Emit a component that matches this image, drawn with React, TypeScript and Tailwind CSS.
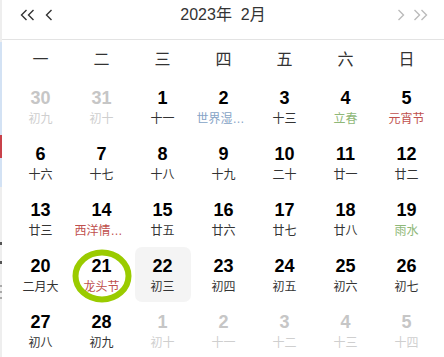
type Day = { d: number; l: string; muted?: boolean; tone?: 'blue' | 'green' | 'red' }

const weeks: Day[][] = [
  [
    { d: 30, l: '初九', muted: true },
    { d: 31, l: '初十', muted: true },
    { d: 1, l: '十一' },
    { d: 2, l: '世界湿地日', tone: 'blue' },
    { d: 3, l: '十三' },
    { d: 4, l: '立春', tone: 'green' },
    { d: 5, l: '元宵节', tone: 'red' },
  ],
  [
    { d: 6, l: '十六' },
    { d: 7, l: '十七' },
    { d: 8, l: '十八' },
    { d: 9, l: '十九' },
    { d: 10, l: '二十' },
    { d: 11, l: '廿一' },
    { d: 12, l: '廿二' },
  ],
  [
    { d: 13, l: '廿三' },
    { d: 14, l: '西洋情人节', tone: 'red' },
    { d: 15, l: '廿五' },
    { d: 16, l: '廿六' },
    { d: 17, l: '廿七' },
    { d: 18, l: '廿八' },
    { d: 19, l: '雨水', tone: 'green' },
  ],
  [
    { d: 20, l: '二月大' },
    { d: 21, l: '龙头节', tone: 'red' },
    { d: 22, l: '初三' },
    { d: 23, l: '初四' },
    { d: 24, l: '初五' },
    { d: 25, l: '初六' },
    { d: 26, l: '初七' },
  ],
  [
    { d: 27, l: '初八' },
    { d: 28, l: '初九' },
    { d: 1, l: '初十', muted: true },
    { d: 2, l: '十一', muted: true },
    { d: 3, l: '十二', muted: true },
    { d: 4, l: '十三', muted: true },
    { d: 5, l: '十四', muted: true },
  ],
]

const toneClass = {
  blue: 'text-[#86a3c6]',
  green: 'text-[#8fb878]',
  red: 'text-[#c0504d]',
}

function Chevron({ dir, color }: { dir: 'l' | 'r'; color: string }) {
  return (
    <svg width="8" height="12" viewBox="0 0 8 12" fill="none">
      <path
        d={dir === 'l' ? 'M6.5 1 L1.5 6 L6.5 11' : 'M1.5 1 L6.5 6 L1.5 11'}
        stroke={color}
        strokeWidth="1.4"
      />
    </svg>
  )
}

export default function App() {
  return (
    <div className="relative flex w-[444px] h-[357px] overflow-hidden bg-white font-['Liberation_Sans','Noto_Sans_CJK_SC',sans-serif]">
      {/* strip of the page behind */}
      <div className="flex w-[2px] flex-col bg-[#eeeeee]">
        <div className="h-[42px]" />
        <div className="h-[93px] bg-[#d3e2f4]" />
        <div className="h-[23px] bg-[#c8414a]" />
        <div className="h-[29px] bg-[#d3e2f4]" />
        <div className="h-[55px]" />
        <div className="h-[3px] bg-[#555]" />
        <div className="h-[16px]" />
        <div className="h-[3px] bg-[#555]" />
        <div className="h-[21px]" />
        <div className="h-[2px] bg-[#aaa]" />
        <div className="h-[4px]" />
        <div className="h-[2px] bg-[#aaa]" />
        <div className="h-[4px]" />
        <div className="h-[2px] bg-[#aaa]" />
      </div>

      <div className="flex-1">
        <header className="grid h-[40px] grid-cols-[1fr_auto_1fr] items-center border-b border-[#e3e3e3]">
          <div className="flex items-center pl-[18px] pb-[10px]">
            <Chevron dir="l" color="#333" />
            <span className="-ml-[1px]">
              <Chevron dir="l" color="#333" />
            </span>
            <span className="ml-[10px]">
              <Chevron dir="l" color="#333" />
            </span>
          </div>
          <div className="pb-[10px] text-[16px] leading-[20px] text-[#333]">2023年&nbsp;&nbsp;2月</div>
          <div className="flex items-center justify-end pr-[16px] pb-[10px]">
            <Chevron dir="r" color="#bbb" />
            <span className="ml-[8px]">
              <Chevron dir="r" color="#bbb" />
            </span>
            <span className="-ml-[1px]">
              <Chevron dir="r" color="#bbb" />
            </span>
          </div>
        </header>

        <div className="ml-[8px] w-[427px]">
          <div className="grid h-[39px] grid-cols-7 items-center">
            {['一', '二', '三', '四', '五', '六', '日'].map((w) => (
              <div key={w} className="text-center text-[16px] leading-[20px] text-[#333]">
                {w}
              </div>
            ))}
          </div>

          {weeks.map((week, i) => (
            <div key={i} className="grid h-[56px] grid-cols-7">
              {week.map((day, j) => {
                const today = day.d === 22 && !day.muted
                return (
                  <div
                    key={j}
                    className={`mx-auto flex h-[55px] w-[56px] flex-col items-center pt-[9px] ${
                      today ? 'rounded-[7px] bg-[#f4f4f4]' : ''
                    }`}
                  >
                    <div
                      className={`text-[18px] font-bold leading-[20px] ${
                        day.muted ? 'text-[#c6c6c6]' : 'text-black'
                      }`}
                    >
                      {day.d}
                    </div>
                    <div
                      className={`mt-[3px] max-w-[54px] truncate text-[12px] leading-[16px] ${
                        day.muted ? 'text-[#cfcfcf]' : day.tone ? toneClass[day.tone] : 'text-[#333]'
                      }`}
                    >
                      {day.l}
                    </div>
                  </div>
                )
              })}
            </div>
          ))}
        </div>
      </div>

      {/* hand-drawn marker around the 21st */}
      <svg className="absolute left-[72px] top-[249px]" width="60" height="54" viewBox="0 0 60 54">
        <ellipse cx="30" cy="27" rx="26.5" ry="23.5" fill="none" stroke="#9acb00" strokeWidth="6" />
      </svg>
    </div>
  )
}
